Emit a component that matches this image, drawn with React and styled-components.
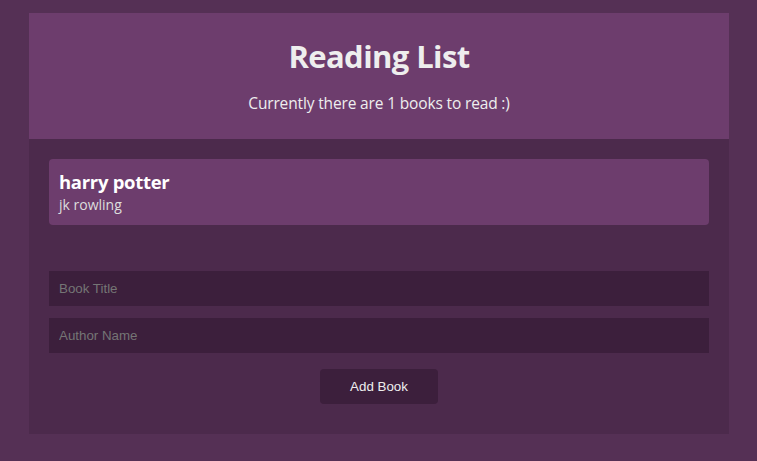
import React, { useState } from "react";
import styled, { createGlobalStyle } from "styled-components";

const GlobalStyle = createGlobalStyle`
  html, body {
    margin: 0;
    padding: 0;
    background: #553055;
  }
  body {
    font-family: "Open Sans", "Noto Sans", sans-serif;
    color: #eee;
  }
  * { box-sizing: border-box; }
`;

const Page = styled.div`
  padding: 13px 28px 27px 29px;
`;

const AppShell = styled.div`
  width: 700px;
  background: #4c2a4c;
  display: flex;
  flex-direction: column;
`;

const Navbar = styled.header`
  background: #6d3d6d;
  height: 126px;
  padding-top: 23px;
  display: flex;
  flex-direction: column;
  align-items: center;
  gap: 16px;
  text-align: center;
`;

const Title = styled.h1`
  margin: 0;
  font-size: 31px;
  line-height: 40px;
  font-weight: 700;
  letter-spacing: -0.6px;
  color: #eee;
`;

const Subtitle = styled.p`
  margin: 0;
  font-size: 15.5px;
  line-height: 22px;
  letter-spacing: -0.15px;
  color: #eee;
`;

const BookList = styled.ul`
  list-style: none;
  margin: 0;
  padding: 20px;
  display: flex;
  flex-direction: column;
  gap: 20px;
`;

const BookItem = styled.li`
  background: #6d3d6d;
  border-radius: 4px;
  padding: 10px;
  cursor: pointer;
  display: flex;
  flex-direction: column;
`;

const BookTitle = styled.div`
  font-size: 18.5px;
  line-height: 26px;
  font-weight: 700;
  letter-spacing: -0.3px;
  color: #fff;
`;

const BookAuthor = styled.div`
  font-size: 14px;
  line-height: 20px;
  color: #ddd;
`;

const Form = styled.form`
  padding: 26px 20px 30px;
  display: flex;
  flex-direction: column;
  gap: 12px;
`;

const TextInput = styled.input`
  width: 100%;
  height: 35px;
  padding: 0 10px;
  border: 0;
  outline: none;
  background: #3c1f3c;
  color: #fff;
  font-family: "Liberation Sans", Arial, sans-serif;
  font-size: 13.33px;
  &::placeholder {
    color: #757575;
  }
`;

const SubmitButton = styled.button`
  align-self: center;
  margin-top: 4px;
  height: 35px;
  padding: 0 30px;
  border: 0;
  border-radius: 4px;
  background: #3c1f3c;
  color: #eee;
  font-family: "Liberation Sans", Arial, sans-serif;
  font-size: 13.33px;
  cursor: pointer;
`;

export default function App() {
  const [books, setBooks] = useState([
    { id: 1, title: "harry potter", author: "jk rowling" },
  ]);
  const [title, setTitle] = useState("");
  const [author, setAuthor] = useState("");

  const handleSubmit = (e) => {
    e.preventDefault();
    if (!title) return;
    setBooks([...books, { id: Date.now(), title, author }]);
    setTitle("");
    setAuthor("");
  };

  return (
    <>
      <GlobalStyle />
      <Page>
        <AppShell>
          <Navbar>
            <Title>Reading List</Title>
            <Subtitle>Currently there are {books.length} books to read :)</Subtitle>
          </Navbar>
          <BookList>
            {books.map((b) => (
              <BookItem key={b.id}>
                <BookTitle>{b.title}</BookTitle>
                <BookAuthor>{b.author}</BookAuthor>
              </BookItem>
            ))}
          </BookList>
          <Form onSubmit={handleSubmit}>
            <TextInput
              type="text"
              placeholder="Book Title"
              value={title}
              onChange={(e) => setTitle(e.target.value)}
            />
            <TextInput
              type="text"
              placeholder="Author Name"
              value={author}
              onChange={(e) => setAuthor(e.target.value)}
            />
            <SubmitButton type="submit">Add Book</SubmitButton>
          </Form>
        </AppShell>
      </Page>
    </>
  );
}
